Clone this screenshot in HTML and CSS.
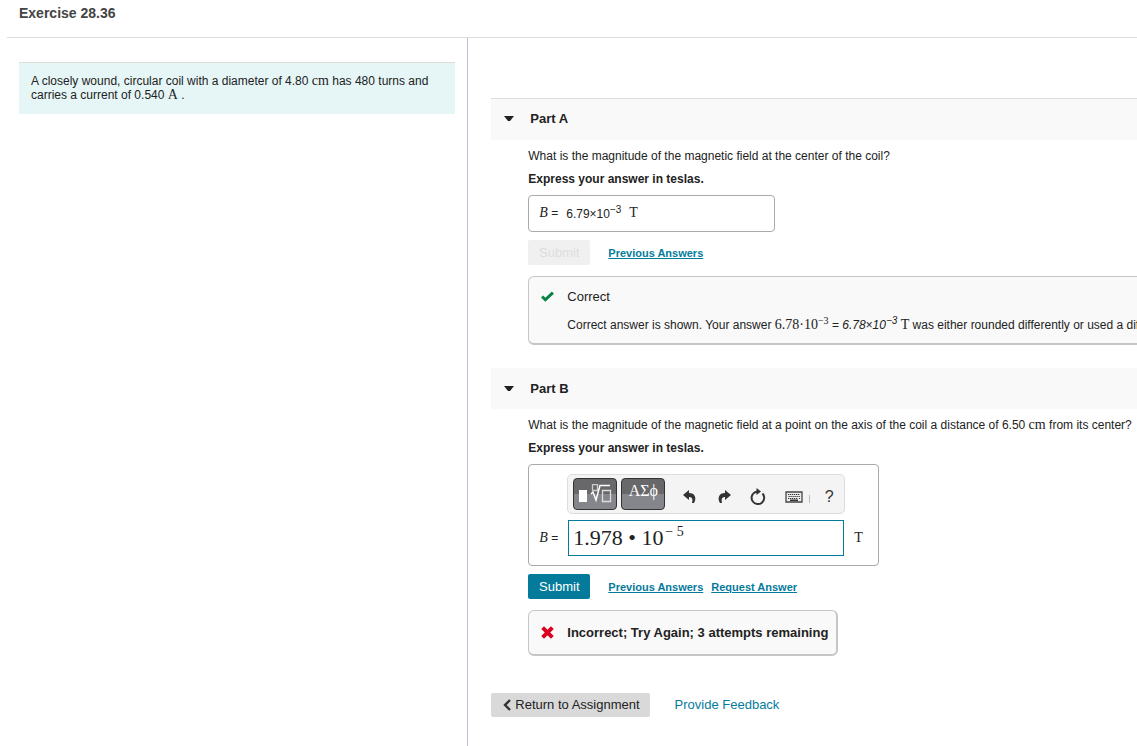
FILE: index.html
```html
<!DOCTYPE html>
<html lang="en">
<head>
<meta charset="utf-8">
<title>Exercise 28.36</title>
<link rel="stylesheet" href="styles.css">
</head>
<body>
<header class="page-header"><h1 class="page-title">Exercise 28.36</h1></header>
<main class="columns">
  <aside class="intro-column">
    <p class="intro">A closely wound, circular coil with a diameter of 4.80 <span class="math">cm</span> has 480 turns and carries a current of 0.540 <span class="math">A</span> .</p>
  </aside>
  <div class="work-column">
    <section class="part">
      <h2 class="part-header part-header-first"><svg class="caret" viewBox="0 0 10 6" aria-hidden="true"><path d="M0 0H10L6 5H4Z"/></svg>Part A</h2>
      <div class="part-body">
        <p class="question">What is the magnitude of the magnetic field at the center of the coil?</p>
        <p class="instructions">Express your answer in teslas.</p>
        <div class="answer-box answer-static">
          <span><i class="math">B</i> =</span><span class="value">6.79×10<sup>−3</sup></span><span class="math">T</span>
        </div>
        <div class="actions">
          <button class="submit" type="button" disabled>Submit</button>
          <a class="action-link" href="#previous-a">Previous Answers</a>
        </div>
        <div class="feedback feedback-wide">
          <svg class="mark" viewBox="0 0 12 10" aria-hidden="true"><path d="M1 5L4 8L11 1.500" fill="none" stroke="#078346" stroke-width="2.800"/></svg>
          <div class="feedback-text">
            <h3 class="feedback-title">Correct</h3>
            <p class="feedback-detail">Correct answer is shown. Your answer <span class="math">6.78·10<sup>−3</sup></span> = <i>6.78×10<sup>−3</sup></i> <span class="math">T</span> was either rounded differently or used a diffe</p>
          </div>
        </div>
      </div>
    </section>
    <section class="part">
      <h2 class="part-header"><svg class="caret" viewBox="0 0 10 6" aria-hidden="true"><path d="M0 0H10L6 5H4Z"/></svg>Part B</h2>
      <div class="part-body">
        <p class="question">What is the magnitude of the magnetic field at a point on the axis of the coil a distance of 6.50 <span class="math">cm</span> from its center?</p>
        <p class="instructions">Express your answer in teslas.</p>
        <div class="answer-box editor">
          <div class="toolbar" role="toolbar" aria-label="Equation tools">
            <button class="palette" type="button" aria-label="Templates">
              <svg width="35" height="20" viewBox="0 0 35 20" aria-hidden="true"><path d="M1 6H9V18H1Z" fill="#fff"/><path d="M14.500 .5H19.500V6.500H14.500Z" fill="none" stroke="#ccc" stroke-width="1.300"/><path d="M13 10L15 8L18 16L22 1.500H32" fill="none" stroke="#fff" stroke-width="1.500"/><path d="M24.500 6.500H32.500V17.500H24.500Z" fill="none" stroke="#ddd" stroke-width="1.300"/></svg>
            </button>
            <button class="palette greek" type="button">ΑΣϕ</button>
            <button class="tool" type="button" aria-label="Undo"><svg width="14" height="14" viewBox="0 0 14 14"><path d="M0 5L6 0V3C12 3 14 8 11 13H9C10 9 9 7 6 7V10Z"/></svg></button>
            <button class="tool" type="button" aria-label="Redo"><svg width="14" height="14" viewBox="0 0 14 14"><path d="M14 5L8 0V3C2 3 0 8 3 13H5C4 9 5 7 8 7V10Z"/></svg></button>
            <button class="tool" type="button" aria-label="Reset"><svg width="16" height="18" viewBox="0 0 16 18"><path d="M12.500 5.500A6.300 6.300 0 1 1 4.500 4.500L8 3.500" fill="none" stroke="#333" stroke-width="2"/><path d="M6.500 0L11 3.500L6.500 7Z"/></svg></button>
            <button class="tool keyboard" type="button" aria-label="Keyboard"><svg width="18" height="12" viewBox="0 0 18 12"><path d="M1 1H17V11H1Z" fill="#eee" stroke="#444" stroke-width="1.300"/><path d="M3 3.500H15M3.500 5.500H15M3 7.500H13M14 7.500H15" fill="none" stroke="#333" stroke-width="1.200" stroke-dasharray="1.300 .7"/><path d="M5 8.500H13V10H5Z"/></svg></button>
            <button class="tool help" type="button" aria-label="Help">?</button>
          </div>
          <label class="field-label" for="mantissa"><i class="math">B</i> =</label>
          <div class="field">
            <input class="mantissa" id="mantissa" type="text" value="1.978 • 10">
            <input class="exponent" type="text" value="− 5" aria-label="Exponent">
          </div>
          <span class="math unit">T</span>
        </div>
        <div class="actions">
          <button class="submit" type="button">Submit</button>
          <a class="action-link" href="#previous-b">Previous Answers</a>
          <a class="action-link" href="#request">Request Answer</a>
        </div>
        <div class="feedback">
          <svg class="mark" viewBox="0 0 12 12" aria-hidden="true"><path d="M1.500 1.500L10.500 10.500M10.500 1.500L1.500 10.500" fill="none" stroke="#db0020" stroke-width="3.600"/></svg>
          <h3 class="feedback-title strong">Incorrect; Try Again; 3 attempts remaining</h3>
        </div>
      </div>
    </section>
    <nav class="page-nav">
      <a class="return" href="#assignment"><svg width="8" height="12" viewBox="0 0 8 12" aria-hidden="true"><path d="M7 1L2 6L7 11" fill="none" stroke="#333" stroke-width="2.400"/></svg>Return to Assignment</a>
      <a class="provide" href="#feedback">Provide Feedback</a>
    </nav>
  </div>
</main>
</body>
</html>
```
FILE: styles.css
```css
* { box-sizing: border-box; }
html, body { height: 100%; }
body {
  display: flex;
  flex-direction: column;
  margin: 0;
  background: #fff;
  color: #222;
  font: 12px/14px "Liberation Sans", Arial, sans-serif;
}
h1, h2, h3, p { margin: 0; }
button { border: 0; padding: 0; font-family: inherit; }
sup { font-size: 10px; line-height: 0; vertical-align: 5px; }
.math { font-family: "Liberation Serif", "Times New Roman", serif; font-size: 14px; line-height: 12px; }
.page-header { height: 38px; margin-left: 7px; padding: 5px 12px; border-bottom: 1px solid #ddd; }
.page-title { color: #444; font-size: 14px; line-height: 16px; }
.columns { display: grid; flex: 1; grid-template-columns: 41.1% minmax(0, 1fr); }
.intro-column { margin-left: 7px; padding: 24px 12px; }
.intro { padding: 11px 12px 12px; border-top: 1px solid #ddd; background: #e6f6f6; }
.work-column { overflow: hidden; padding: 60px 0 29px 23px; border-left: 1px solid #b9c5d6; }
.part { margin-bottom: 23px; }
.part-header {
  display: flex;
  align-items: center;
  gap: 16px;
  height: 41px;
  padding-left: 13px;
  background: #f9f9f9;
  font-size: 13px;
  font-weight: bold;
}
.part-header-first { height: 42px; padding-bottom: 2px; border-top: 1px solid #ddd; }
.caret { width: 10px; height: 6px; fill: #222; }
.part-body { padding: 9px 0 0 37px; }
.question { white-space: nowrap; }
.instructions { margin: 9px 0; font-weight: bold; }
.answer-box { border: 1px solid #aaa; border-radius: 4px; background: #fff; }
.answer-static { display: flex; align-items: center; gap: 8px; width: 247px; height: 37px; padding: 0 0 2px 10px; }
.value { padding-top: 3px; }
.actions { display: flex; align-items: center; gap: 8px; margin: 8px 0 11px; }
.submit { width: 62px; height: 25px; margin-right: 10px; border-radius: 2px; background: #057b9c; color: #fff; font-size: 13px; }
.submit:disabled { background: #f0f0f0; color: #ddd; }
.action-link { color: #057b9c; font-size: 11px; font-weight: bold; }
.feedback {
  display: flex;
  gap: 13px;
  width: fit-content;
  padding: 14px 8px 14px 12px;
  border: 1px solid #c6c6c6;
  border-right-width: 2px;
  border-bottom-width: 2px;
  border-radius: 6px;
  background: #f9f9f9;
}
.feedback-wide { width: auto; height: 69px; margin-right: -12px; padding-top: 12px; }
.mark { flex: none; width: 13px; height: 13px; margin-top: 1px; }
.feedback-title { font-size: 13px; font-weight: normal; line-height: 15px; }
.strong { font-weight: bold; }
.feedback-detail { margin-top: 14px; white-space: nowrap; }
.editor {
  display: grid;
  grid-template-columns: 29px 276px auto;
  align-items: center;
  row-gap: 6px;
  width: 351px;
  padding: 9px 10px;
}
.toolbar {
  display: flex;
  grid-column: 2;
  align-items: center;
  gap: 4px;
  width: 278px;
  height: 40px;
  margin-left: -1px;
  padding-left: 5px;
  border: 1px solid #ddd;
  border-radius: 5px;
  background: #f4f4f4;
}
.palette {
  display: grid;
  flex: none;
  place-items: center;
  width: 44px;
  height: 32px;
  border: 1px solid #333;
  border-radius: 4px;
  background: linear-gradient(#68686b 50%, #85858c 50%);
  color: #fff;
}
.greek { padding-bottom: 6px; font-family: "Liberation Serif", serif; font-size: 16px; }
.tool { display: grid; place-items: center; width: 31px; height: 32px; padding-top: 6px; background: none; fill: #333; }
.greek + .tool { margin-left: 6px; }
.help { padding-top: 5px; color: #333; font-size: 16px; }
.keyboard { width: 34px; background: linear-gradient(#bbb, #bbb) 100% 17px / 1px 8px no-repeat; }
.field-label { grid-column: 1; }
.field { display: flex; width: 276px; height: 36px; padding-left: 4px; border: 1px solid #057b9c; background: #fff; }
.field input { min-width: 0; padding: 0; border: 0; outline: 0; background: none; color: #222; font-family: "Liberation Serif", serif; }
.mantissa { width: 92px; font-size: 22px; }
.exponent { flex: 1; height: 21px; font-size: 14px; }
.unit { padding-left: 10px; }
.page-nav { display: flex; align-items: center; gap: 25px; margin-top: 37px; font-size: 13px; }
.page-nav a { text-decoration: none; }
.return { display: flex; align-items: center; gap: 4px; height: 24px; padding: 0 10px 0 12px; border-radius: 2px; background: #d9d9d9; color: #222; }
.provide { color: #057b9c; }
```
